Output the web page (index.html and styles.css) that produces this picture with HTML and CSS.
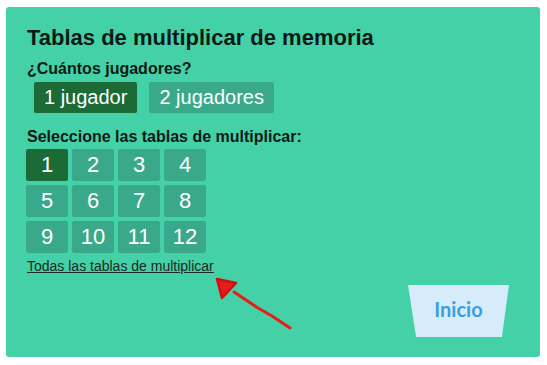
FILE: index.html
```html
<!DOCTYPE html>
<html lang="es">
<head>
<meta charset="utf-8">
<title>Tablas de multiplicar de memoria</title>
<link rel="stylesheet" href="styles.css">
</head>
<body>
<div class="card">
  <h1 class="title">Tablas de multiplicar de memoria</h1>
  <h2 class="label">¿Cuántos jugadores?</h2>
  <div class="players">
    <button class="btn active">1 jugador</button>
    <button class="btn">2 jugadores</button>
  </div>
  <h2 class="label label-tables">Seleccione las tablas de multiplicar:</h2>
  <div class="grid">
    <button class="tile active">1</button>
    <button class="tile">2</button>
    <button class="tile">3</button>
    <button class="tile">4</button>
    <button class="tile">5</button>
    <button class="tile">6</button>
    <button class="tile">7</button>
    <button class="tile">8</button>
    <button class="tile">9</button>
    <button class="tile">10</button>
    <button class="tile">11</button>
    <button class="tile">12</button>
  </div>
  <a class="all" href="#">Todas las tablas de multiplicar</a>
  <div class="footer">
    <button class="start">Inicio</button>
  </div>
  <svg class="arrow" width="90" height="65" viewBox="0 0 90 65">
    <path d="M80 58 L62 46 L48 38 L24 22" fill="none" stroke="#e81c1c" stroke-width="3" stroke-linecap="round" stroke-linejoin="round"/>
    <path d="M7 9 L26 13 L12 28 Z" fill="#e81c1c" stroke="#d01010" stroke-width="2.5" stroke-linejoin="round"/>
  </svg>
</div>
</body>
</html>
```

FILE: styles.css
```css
html, body {
  margin: 0;
  background: #ffffff;
}
body {
  padding: 7px 7px 8px 6px;
  font-family: "Liberation Sans", Arial, sans-serif;
}
.card {
  position: relative;
  box-sizing: border-box;
  height: 350px;
  background: #44d1a7;
  border-radius: 3px;
  padding: 18px 21px 0 21px;
  display: flex;
  flex-direction: column;
  align-items: flex-start;
}
.title {
  margin: 0;
  font-size: 22px;
  line-height: 26px;
  font-weight: bold;
  color: #0d1a14;
}
.label {
  margin: 9px 0 0 0;
  font-size: 16px;
  line-height: 18px;
  font-weight: bold;
  color: #0d1a14;
}
.label-tables {
  margin-top: 15px;
}
.players {
  display: flex;
  gap: 12px;
  margin: 4px 0 0 7px;
}
.btn {
  height: 31px;
  padding: 0 10px;
  border: none;
  border-radius: 2px;
  background: #3aa98b;
  color: #ffffff;
  font-family: "Liberation Sans", Arial, sans-serif;
  font-size: 20px;
}
.btn.active, .tile.active {
  background: #1c6b36;
}
.grid {
  display: grid;
  grid-template-columns: repeat(4, 42px);
  grid-auto-rows: 32px;
  gap: 4px;
  margin: 3px 0 0 -1px;
}
.tile {
  border: none;
  border-radius: 2px;
  background: #3aa98b;
  color: #ffffff;
  font-family: "Liberation Sans", Arial, sans-serif;
  font-size: 22px;
  padding: 0;
}
.all {
  margin-top: 5px;
  font-size: 14px;
  line-height: 16px;
  color: #1a2a22;
  text-decoration: underline;
}
.footer {
  margin-top: auto;
  align-self: stretch;
  display: flex;
  justify-content: flex-end;
  padding: 0 10px 20px 0;
}
.start {
  width: 101px;
  height: 52px;
  border: none;
  background: #d6ecfb;
  clip-path: polygon(0 0, 100% 0, 93% 100%, 8% 100%);
  color: #3b9de2;
  font-family: "Lato", "Open Sans", sans-serif;
  font-weight: bold;
  font-size: 20px;
  padding: 0 0 4px 0;
}
.arrow {
  position: absolute;
  left: 204px;
  top: 263px;
}
```
